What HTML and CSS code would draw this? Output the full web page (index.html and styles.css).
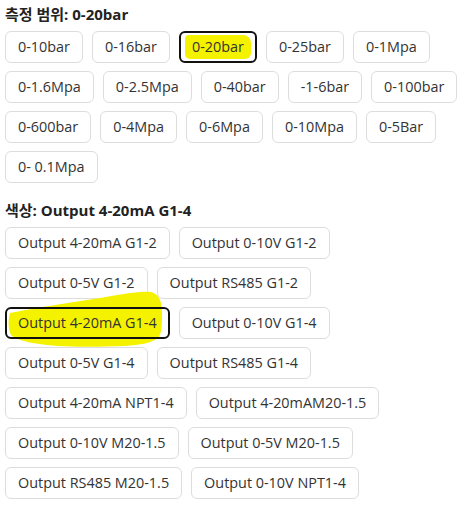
FILE: index.html
```html
<!DOCTYPE html>
<html lang="ko">
<head>
<meta charset="UTF-8">
<meta name="viewport" content="width=device-width, initial-scale=1.0">
<title>옵션 선택</title>
<link rel="stylesheet" href="styles.css">
</head>
<body>

<div class="option-group">
    <div class="option-title">측정 범위: <span class="option-value">0-20bar</span></div>
    <div class="option-list">
        <button class="option-btn">0-10bar</button>
        <button class="option-btn">0-16bar</button>
        <button class="option-btn selected"><span class="marker marker-small"></span><span class="label">0-20bar</span></button>
        <button class="option-btn">0-25bar</button>
        <button class="option-btn">0-1Mpa</button>
        <button class="option-btn">0-1.6Mpa</button>
        <button class="option-btn">0-2.5Mpa</button>
        <button class="option-btn">0-40bar</button>
        <button class="option-btn">-1-6bar</button>
        <button class="option-btn">0-100bar</button>
        <button class="option-btn">0-600bar</button>
        <button class="option-btn">0-4Mpa</button>
        <button class="option-btn">0-6Mpa</button>
        <button class="option-btn">0-10Mpa</button>
        <button class="option-btn">0-5Bar</button>
        <button class="option-btn">0- 0.1Mpa</button>
    </div>
</div>

<div class="option-group">
    <div class="option-title">색상: <span class="option-value">Output 4-20mA G1-4</span></div>
    <div class="option-list">
        <button class="option-btn">Output 4-20mA G1-2</button>
        <button class="option-btn">Output 0-10V G1-2</button>
        <button class="option-btn">Output 0-5V G1-2</button>
        <button class="option-btn">Output RS485 G1-2</button>
        <button class="option-btn selected">
            <!-- marker scribble over the chosen option -->
            <svg class="marker-stroke" width="170" height="40" viewBox="0 0 170 40">
                <path d="M5 6 C25 2 60 -4 95 -9 C118 -13 136 -16 146 -15 C154 -13 157 -6 157 6 C157 16 157 24 154 30 C148 36 135 38 120 39 C95 40 70 40 52 39 C30 37 12 34 6 28 C3 22 3 12 5 6 Z" fill="#f5f200"/>
            </svg>
            <span class="label">Output 4-20mA G1-4</span>
        </button>
        <button class="option-btn">Output 0-10V G1-4</button>
        <button class="option-btn">Output 0-5V G1-4</button>
        <button class="option-btn">Output RS485 G1-4</button>
        <button class="option-btn">Output 4-20mA NPT1-4</button>
        <button class="option-btn">Output 4-20mAM20-1.5</button>
        <button class="option-btn">Output 0-10V M20-1.5</button>
        <button class="option-btn">Output 0-5V M20-1.5</button>
        <button class="option-btn">Output RS485 M20-1.5</button>
        <button class="option-btn">Output 0-10V NPT1-4</button>
    </div>
</div>

</body>
</html>
```

FILE: styles.css
```css
body {
    font-family: "Open Sans", "Noto Sans CJK KR", sans-serif;
    margin: 0;
    padding: 4px 5px;
    background: #fff;
    color: #333;
}
.option-group {
    margin-bottom: 17px;
}
.option-title {
    font-family: "Open Sans", "Noto Sans CJK KR", sans-serif;
    font-weight: bold;
    font-size: 15px;
    line-height: 20px;
    color: #222;
    margin-bottom: 7px;
}
.option-list {
    display: flex;
    flex-wrap: wrap;
    gap: 8px 9px;
}
.option-btn {
    position: relative;
    font-family: "Open Sans", sans-serif;
    font-size: 14.4px;
    line-height: 20px;
    color: #333;
    background: #fff;
    border: 1px solid #ddd;
    border-radius: 6px;
    padding: 5px 12px;
    cursor: pointer;
}
.option-btn.selected {
    border: 2px solid transparent;
    padding: 4px 11px;
}
.option-btn.selected::after {
    content: "";
    position: absolute;
    top: -2px;
    left: -2px;
    right: -2px;
    bottom: -2px;
    border: 2px solid #111;
    border-radius: 6px;
}
.option-btn .label {
    position: relative;
}
.marker {
    position: absolute;
    background: #f5f200;
    border-radius: 4px 8px 6px 5px;
}
.marker-small {
    left: 4px;
    right: 4px;
    top: 2px;
    bottom: 2px;
}
.marker-stroke {
    position: absolute;
    left: -2px;
    top: -2px;
    overflow: visible;
}
```
